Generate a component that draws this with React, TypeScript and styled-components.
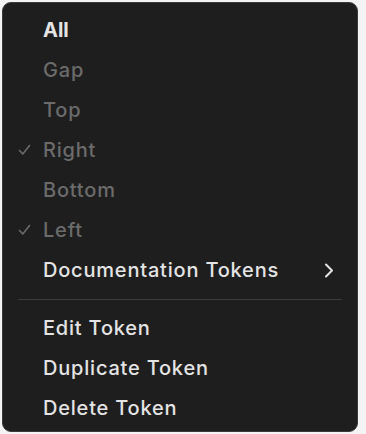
import styled, { createGlobalStyle } from 'styled-components'

const GlobalStyle = createGlobalStyle`
  html, body {
    margin: 0;
    padding: 0;
    background: #ececec;
  }
  body {
    font-family: Inter, "Liberation Sans", Arial, sans-serif;
    -webkit-font-smoothing: antialiased;
  }
`

type Item = {
  label: string
  bold?: boolean
  disabled?: boolean
  checked?: boolean
  submenu?: boolean
}

const topItems: Item[] = [
  { label: 'All', bold: true },
  { label: 'Gap', disabled: true },
  { label: 'Top', disabled: true },
  { label: 'Right', disabled: true, checked: true },
  { label: 'Bottom', disabled: true },
  { label: 'Left', disabled: true, checked: true },
  { label: 'Documentation Tokens', submenu: true },
]

const bottomItems: Item[] = [{ label: 'Edit Token' }, { label: 'Duplicate Token' }, { label: 'Delete Token' }]

function Check() {
  return (
    <svg width="13" height="12" viewBox="0 0 13 12" fill="none">
      <path d="M1.5 6.5 L4.8 10 L11.5 1.5" stroke="currentColor" strokeWidth="1.6" strokeLinecap="round" strokeLinejoin="round" />
    </svg>
  )
}

function Chevron() {
  return (
    <svg width="10" height="15" viewBox="0 0 10 15" fill="none">
      <path d="M2 1.5 L8 7.5 L2 13.5" stroke="currentColor" strokeWidth="2" strokeLinecap="round" strokeLinejoin="round" />
    </svg>
  )
}

function Row({ item }: { item: Item }) {
  return (
    <MenuRow $disabled={item.disabled}>
      <CheckSlot>{item.checked && <Check />}</CheckSlot>
      <Label $bold={item.bold}>{item.label}</Label>
      {item.submenu && (
        <Arrow>
          <Chevron />
        </Arrow>
      )}
    </MenuRow>
  )
}

export default function App() {
  return (
    <>
      <GlobalStyle />
      <Page>
        <Menu>
          {topItems.map((item) => (
            <Row key={item.label} item={item} />
          ))}
          <Separator />
          {bottomItems.map((item) => (
            <Row key={item.label} item={item} />
          ))}
        </Menu>
      </Page>
    </>
  )
}

const Page = styled.div`
  width: 366px;
  height: 434px;
  padding: 2px 8px 2px 2px;
  box-sizing: border-box;
  background: #f4f4f4;
`

const Menu = styled.div`
  height: 100%;
  box-sizing: border-box;
  background: #1e1e1e;
  border: 1px solid #3a3a3a;
  border-radius: 9px;
  padding: 7px 0 0;
  display: flex;
  flex-direction: column;
`

const MenuRow = styled.div<{ $disabled?: boolean }>`
  height: 40px;
  display: flex;
  align-items: center;
  padding: 0 23px 0 15px;
  color: ${(p) => (p.$disabled ? '#6b6b6b' : '#e4e4e4')};
  font-size: 20px;
`

const CheckSlot = styled.span`
  width: 25px;
  display: flex;
  align-items: center;
  color: #6b6b6b;
`

const Label = styled.span<{ $bold?: boolean }>`
  flex: 1;
  font-weight: ${(p) => (p.$bold ? 700 : 500)};
  letter-spacing: ${(p) => (p.$bold ? '0' : '0.8px')};
`

const Arrow = styled.span`
  display: flex;
  align-items: center;
  color: #e4e4e4;
`

const Separator = styled.div`
  height: 1px;
  background: #3c3c3c;
  margin: 9px 15px 8px 15px;
`
